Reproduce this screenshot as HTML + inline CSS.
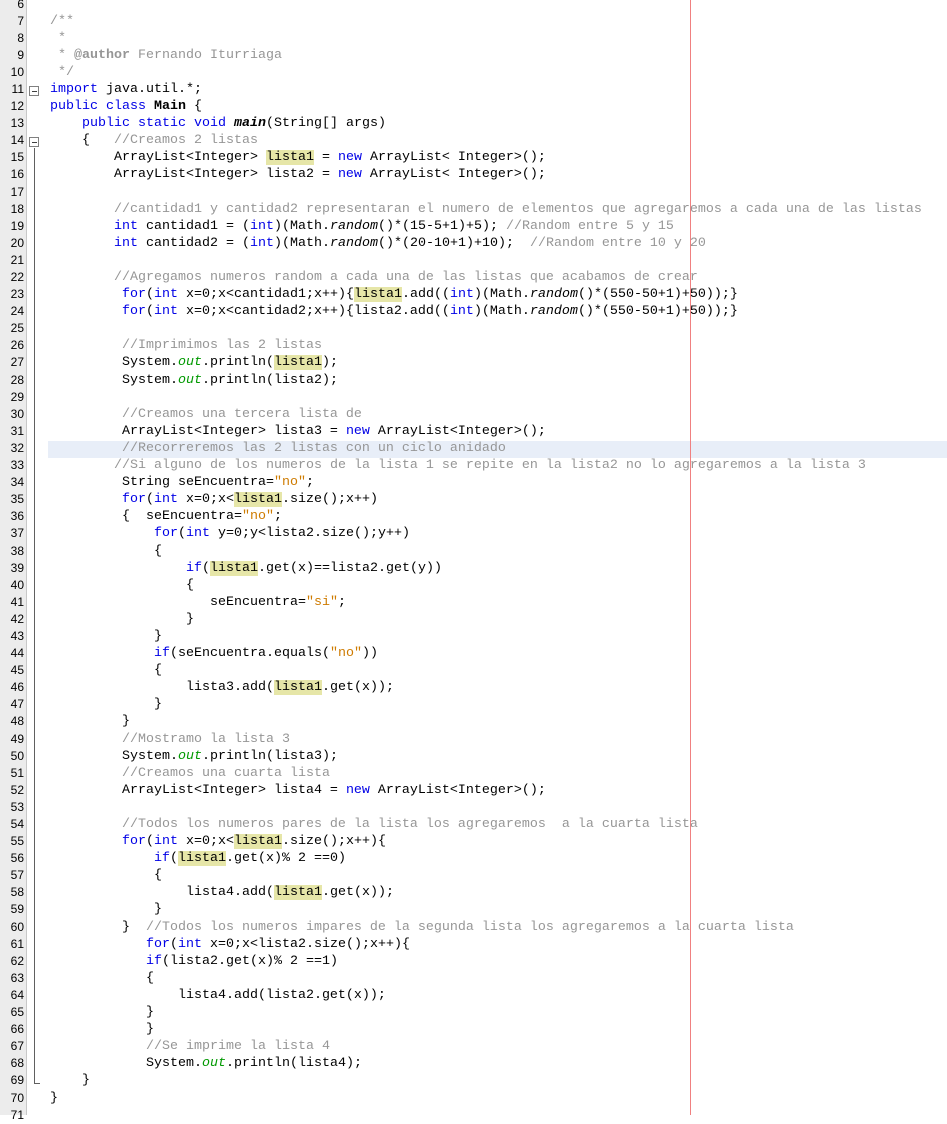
<!DOCTYPE html>
<html><head><meta charset="utf-8"><style>
body{margin:0;width:947px;height:1115px;overflow:hidden;background:#fff;position:relative;font-family:"Liberation Mono",monospace;}
#gut{position:absolute;left:0;top:0;width:26px;height:1115px;background:#ececec;border-right:1px solid #c8c8c8;}
#nums{position:absolute;left:0;top:-4.5px;width:24px;text-align:right;font:12px/17.1px "Liberation Sans",sans-serif;color:#000;}
#code{position:absolute;left:50px;top:-4.5px;margin:0;font-size:13.33px;line-height:17.1px;color:#000;white-space:pre;}
.k{color:#0000e6}.c{color:#969696}.s{color:#ce7b00}.o{color:#009900;font-style:italic}.i{font-style:italic;font-weight:bold}.b{font-weight:bold}
.h{background:#e6e6a8}
#hl{position:absolute;left:48px;right:0;top:441px;height:17px;background:#e8eef8;}
#red{position:absolute;left:690px;top:0;width:1px;height:1115px;background:#f08080;}
.fb{position:absolute;left:29px;width:8px;height:8px;border:1px solid #808080;background:#fff;}
.fb:after{content:"";position:absolute;left:2px;top:4px;width:5px;height:1px;background:#404040;}
</style></head><body>
<div id="gut"></div>
<div id="hl"></div>
<div id="red"></div>
<div class="fb" style="top:86px"></div>
<div class="fb" style="top:137px"></div>
<div style="position:absolute;left:34px;top:148px;width:1px;height:936px;background:#606060"></div>
<div style="position:absolute;left:34px;top:1083px;width:6px;height:1px;background:#606060"></div>
<div id="nums">6<br>7<br>8<br>9<br>10<br>11<br>12<br>13<br>14<br>15<br>16<br>17<br>18<br>19<br>20<br>21<br>22<br>23<br>24<br>25<br>26<br>27<br>28<br>29<br>30<br>31<br>32<br>33<br>34<br>35<br>36<br>37<br>38<br>39<br>40<br>41<br>42<br>43<br>44<br>45<br>46<br>47<br>48<br>49<br>50<br>51<br>52<br>53<br>54<br>55<br>56<br>57<br>58<br>59<br>60<br>61<br>62<br>63<br>64<br>65<br>66<br>67<br>68<br>69<br>70<br>71</div>
<pre id="code">

<span class="c">/**</span>
<span class="c"> *</span>
<span class="c"> * <b>@author</b> Fernando Iturriaga</span>
<span class="c"> */</span>
<span class="k">import</span> java.util.*;
<span class="k">public class</span> <span class="b">Main</span> {
    <span class="k">public static void</span> <span class="i">main</span>(String[] args)
    {   <span class="c">//Creamos 2 listas</span>
        ArrayList&lt;Integer&gt; <span class="h">lista1</span> = <span class="k">new</span> ArrayList&lt; Integer&gt;();
        ArrayList&lt;Integer&gt; lista2 = <span class="k">new</span> ArrayList&lt; Integer&gt;();

        <span class="c">//cantidad1 y cantidad2 representaran el numero de elementos que agregaremos a cada una de las listas</span>
        <span class="k">int</span> cantidad1 = (<span class="k">int</span>)(Math.<i>random</i>()*(15-5+1)+5); <span class="c">//Random entre 5 y 15</span>
        <span class="k">int</span> cantidad2 = (<span class="k">int</span>)(Math.<i>random</i>()*(20-10+1)+10);  <span class="c">//Random entre 10 y 20</span>

        <span class="c">//Agregamos numeros random a cada una de las listas que acabamos de crear</span>
         <span class="k">for</span>(<span class="k">int</span> x=0;x&lt;cantidad1;x++){<span class="h">lista1</span>.add((<span class="k">int</span>)(Math.<i>random</i>()*(550-50+1)+50));}
         <span class="k">for</span>(<span class="k">int</span> x=0;x&lt;cantidad2;x++){lista2.add((<span class="k">int</span>)(Math.<i>random</i>()*(550-50+1)+50));}

         <span class="c">//Imprimimos las 2 listas</span>
         System.<span class="o">out</span>.println(<span class="h">lista1</span>);
         System.<span class="o">out</span>.println(lista2);

         <span class="c">//Creamos una tercera lista de</span>
         ArrayList&lt;Integer&gt; lista3 = <span class="k">new</span> ArrayList&lt;Integer&gt;();
         <span class="c">//Recorreremos las 2 listas con un ciclo anidado</span>
        <span class="c">//Si alguno de los numeros de la lista 1 se repite en la lista2 no lo agregaremos a la lista 3</span>
         String seEncuentra=<span class="s">"no"</span>;
         <span class="k">for</span>(<span class="k">int</span> x=0;x&lt;<span class="h">lista1</span>.size();x++)
         {  seEncuentra=<span class="s">"no"</span>;
             <span class="k">for</span>(<span class="k">int</span> y=0;y&lt;lista2.size();y++)
             {
                 <span class="k">if</span>(<span class="h">lista1</span>.get(x)==lista2.get(y))
                 {
                    seEncuentra=<span class="s">"si"</span>;
                 }
             }
             <span class="k">if</span>(seEncuentra.equals(<span class="s">"no"</span>))
             {
                 lista3.add(<span class="h">lista1</span>.get(x));
             }
         }
         <span class="c">//Mostramo la lista 3</span>
         System.<span class="o">out</span>.println(lista3);
         <span class="c">//Creamos una cuarta lista</span>
         ArrayList&lt;Integer&gt; lista4 = <span class="k">new</span> ArrayList&lt;Integer&gt;();

         <span class="c">//Todos los numeros pares de la lista los agregaremos  a la cuarta lista</span>
         <span class="k">for</span>(<span class="k">int</span> x=0;x&lt;<span class="h">lista1</span>.size();x++){
             <span class="k">if</span>(<span class="h">lista1</span>.get(x)% 2 ==0)
             {
                 lista4.add(<span class="h">lista1</span>.get(x));
             }
         }  <span class="c">//Todos los numeros impares de la segunda lista los agregaremos a la cuarta lista</span>
            <span class="k">for</span>(<span class="k">int</span> x=0;x&lt;lista2.size();x++){
            <span class="k">if</span>(lista2.get(x)% 2 ==1)
            {
                lista4.add(lista2.get(x));
            }
            }
            <span class="c">//Se imprime la lista 4</span>
            System.<span class="o">out</span>.println(lista4);
    }
}
</pre>
</body></html>
